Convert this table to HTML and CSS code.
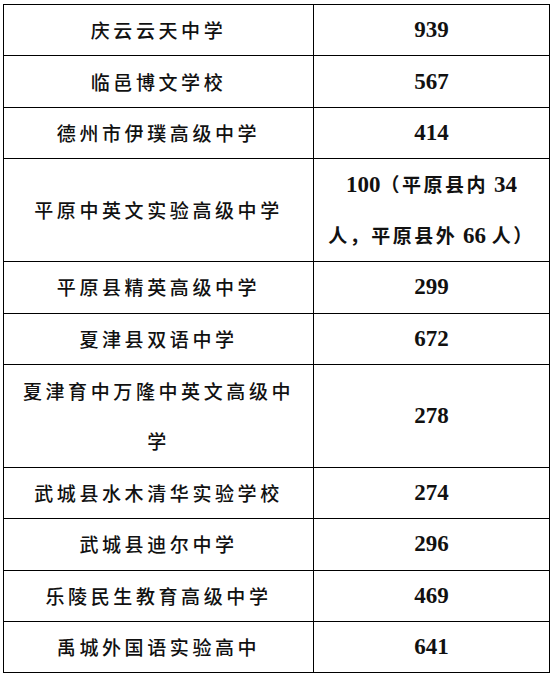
FILE: index.html
```html
<!DOCTYPE html>
<html lang="zh-CN">
<head>
<meta charset="utf-8">
<title>学校名单</title>
<link rel="stylesheet" href="styles.css">
</head>
<body>
<table class="list">
  <tbody>
    <tr class="one"><td class="name">庆云云天中学</td><td class="num">939</td></tr>
    <tr class="one"><td class="name">临邑博文学校</td><td class="num">567</td></tr>
    <tr class="one"><td class="name">德州市伊璞高级中学</td><td class="num">414</td></tr>
    <tr class="two"><td class="name">平原中英文实验高级中学</td><td class="num">100<span class="zh">（平原县内</span> 34<br><span class="zh">人，平原县外</span> 66 <span class="zh">人）</span></td></tr>
    <tr class="one"><td class="name">平原县精英高级中学</td><td class="num">299</td></tr>
    <tr class="one"><td class="name">夏津县双语中学</td><td class="num">672</td></tr>
    <tr class="two"><td class="name">夏津育中万隆中英文高级中<br>学</td><td class="num">278</td></tr>
    <tr class="one"><td class="name">武城县水木清华实验学校</td><td class="num">274</td></tr>
    <tr class="one"><td class="name">武城县迪尔中学</td><td class="num">296</td></tr>
    <tr class="one"><td class="name">乐陵民生教育高级中学</td><td class="num">469</td></tr>
    <tr class="one"><td class="name">禹城外国语实验高中</td><td class="num">641</td></tr>
  </tbody>
</table>
</body>
</html>
```
FILE: styles.css
```css
html, body {
  margin: 0;
  padding: 0;
  background: #ffffff;
}

.list {
  margin: 4px 0 0 3px;
  width: 547px;
  border-collapse: collapse;
  table-layout: fixed;
  color: #111111;
  font-family: "Liberation Serif", "Noto Sans CJK SC", serif;
  font-weight: bold;
}

.list tr.one {
  height: 51.4px;
}

.list tr.two {
  height: 102.8px;
}

.list td {
  border: 1px solid #000000;
  padding: 0 6px;
  text-align: center;
  vertical-align: middle;
  line-height: 50px;
  font-size: 23px;
}

.list td.name {
  width: 297px;
  letter-spacing: 3.6px;
  font-family: "Noto Sans CJK SC", sans-serif;
  font-weight: 500;
  font-size: 19px;
}

.list td.num {
  letter-spacing: 0;
}

.list .zh {
  font-family: "Noto Sans CJK SC", sans-serif;
  font-size: 19px;
  letter-spacing: 2.5px;
}
```
